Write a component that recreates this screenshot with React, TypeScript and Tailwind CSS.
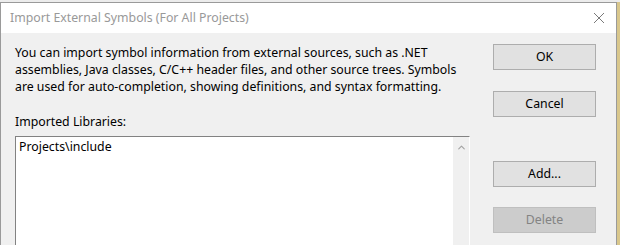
import { ChevronUp } from 'lucide-react'

const font = { fontFamily: '"Noto Sans", "Liberation Sans", sans-serif' }

function DialogButton({ label, disabled = false, className = '' }: { label: string; disabled?: boolean; className?: string }) {
  return (
    <button
      disabled={disabled}
      className={`block h-[26px] w-[103px] border text-[12.3px] ${className} ${
        disabled
          ? 'border-[#bfbfbf] bg-[#cccccc] text-[#838383]'
          : 'border-[#adadad] bg-[#e1e1e1] text-black'
      }`}
    >
      {label}
    </button>
  )
}

export default function App() {
  return (
    <div className="h-[245px] w-[620px] overflow-hidden bg-[#d9c78c]" style={font}>
      <div className="h-[2px] w-full bg-[#ececec]" />
      <div className="flex h-[243px] w-[617px] flex-col border-r border-t border-l border-[#9a9a9a] bg-[#f0f0f0]">
        {/* Title bar */}
        <div className="flex h-[30px] shrink-0 items-center justify-between bg-white pl-[9px] pr-[10px]">
          <span className="text-[12.3px] text-[#999999]">Import External Symbols (For All Projects)</span>
          <svg width="12" height="12" viewBox="0 0 12 12" className="mr-[1px]">
            <path d="M1 1 L11 11 M11 1 L1 11" stroke="#7a7a7a" strokeWidth="1" fill="none" />
          </svg>
        </div>

        {/* Body */}
        <div className="flex flex-1 overflow-hidden">
          <div className="w-[476px] shrink-0 pl-[14px] pt-[11px]">
            <p className="w-[460px] text-[12.3px] leading-[17px] text-black">
              You can import symbol information from external sources, such as .NET assemblies, Java classes, C/C++
              header files, and other source trees. Symbols are used for auto-completion, showing definitions, and
              syntax formatting.
            </p>
            <div className="mt-[18px] text-[12.3px] leading-[17px] text-black">Imported Libraries:</div>
            <div className="mt-[6px] flex h-[140px] w-[455px] border-l border-t border-[#828282] border-b border-r border-b-white border-r-white">
              <div className="flex-1 bg-white pl-[3px] pt-[1px] text-[12.3px] leading-[17px] text-black">
                Projects\include
              </div>
              <div className="flex w-[16px] justify-center bg-[#f0f0f0] pt-[5px]">
                <ChevronUp size={11} strokeWidth={2.5} color="#a3a3a3" />
              </div>
            </div>
          </div>

          <div className="flex flex-col pl-[16px] pt-[11px]">
            <DialogButton label="OK" />
            <DialogButton label="Cancel" className="mt-[21px]" />
            <DialogButton label="Add..." className="mt-[44px]" />
            <DialogButton label="Delete" disabled className="mt-[20px]" />
          </div>
        </div>
      </div>
    </div>
  )
}
